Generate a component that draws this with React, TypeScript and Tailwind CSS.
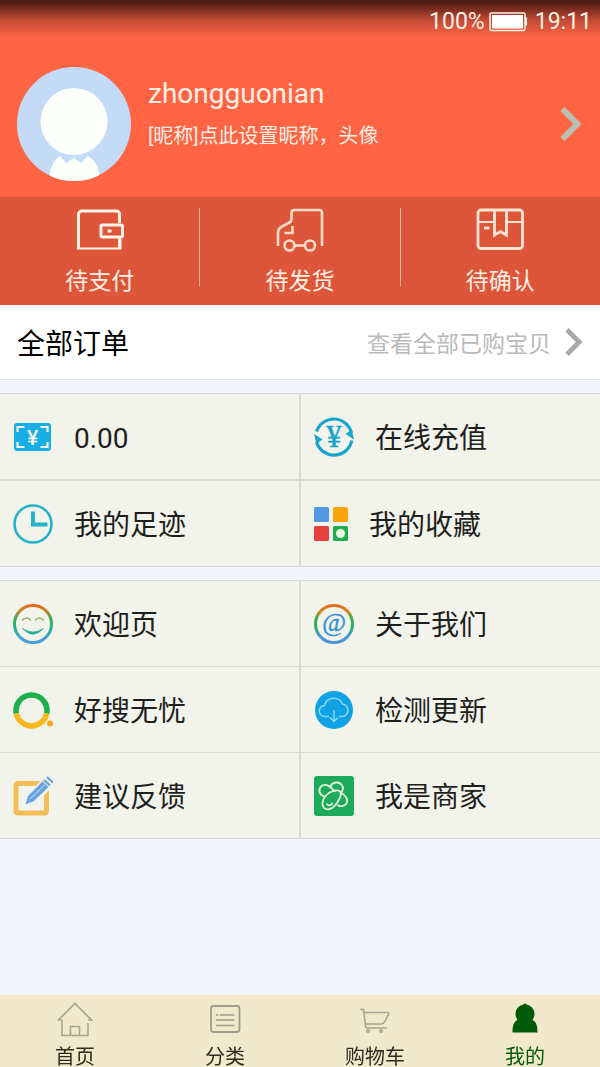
import {PropsWithChildren, ReactNode} from "react";

interface EntryProps {
  icon: ReactNode;
  label: string;
}

interface TabProps extends EntryProps {
  active?: boolean;
}

const WalletIcon = () => (
  <svg width="48" height="44" viewBox="0 0 48 44" fill="none" stroke="#fff3e6" strokeWidth="3">
    <path d="M43.5 15V6a3 3 0 0 0-3-3H6a3.500 3.500 0 0 0-3.500 3.500V40" />
    <path d="M1 40.500h43.500V31" strokeWidth="2" />
    <path d="M43.500 30v11" />
    <rect x="25" y="17" width="21.500" height="12" rx="1.500" />
    <rect x="31.500" y="21.500" width="4" height="3" fill="#fff3e6" stroke="none" />
  </svg>
);

const TruckIcon = () => (
  <svg width="48" height="44" viewBox="0 0 48 44" fill="none" stroke="#fbdccb" strokeWidth="2.600">
    <path d="M2 38V25q0-4 3-6l8.500-4.500Q15.500 13.500 15.500 11V5q0-3 3-3H43q3 0 3 3v33" />
    <path d="M16.500 18v7H8.500" />
    <circle cx="13.500" cy="37.500" r="5" />
    <circle cx="34" cy="37.500" r="5" />
    <path d="M18.500 37.500H29" />
  </svg>
);

const ParcelIcon = () => (
  <svg width="48" height="44" viewBox="0 0 48 44" fill="none" stroke="#fde5d6" strokeWidth="2.800">
    <rect x="2" y="2" width="44.500" height="38.500" rx="3" />
    <path d="M2 14h16M30.500 14h16" strokeWidth="2.200" />
    <path d="M18.500 2v25l6-3.500 6 3.500V2" />
    <path d="M8 20h5.500" />
  </svg>
);

const BalanceIcon = () => (
  <svg width="40" height="40" viewBox="0 0 40 40">
    <rect x="1" y="6" width="37" height="28" rx="3" fill="#18aee6" />
    <path d="M4.500 15v-5h7M34.500 15v-5h-7M4.500 25v5h7M34.500 25v5h-7" fill="none" stroke="#f2f3ea" strokeWidth="2.200" />
    <text x="19.500" y="27.500" textAnchor="middle" fontFamily="Roboto, sans-serif" fontSize="21" fontWeight="500" fill="#f2f3ea">
      ¥
    </text>
  </svg>
);

const RechargeIcon = () => (
  <svg width="40" height="40" viewBox="0 0 40 40">
    <g fill="none" stroke="#17a5cf" strokeWidth="3.200">
      <path d="M2.500 14.500A18.200 18.200 0 0 1 37.500 16" />
      <path d="M37.800 23.500A18.200 18.200 0 0 1 2.500 25" />
    </g>
    <path d="M31.500 17l6-4.500 2.500 10zM8.500 22.500l-6 4.500L0 17z" fill="#17a5cf" />
    <text x="20" y="29.500" textAnchor="middle" fontFamily="Liberation Serif, serif" fontSize="31" fill="#17a5cf" stroke="#17a5cf" strokeWidth="0.500">
      ¥
    </text>
  </svg>
);

const ClockIcon = () => (
  <svg width="40" height="40" viewBox="0 0 40 40" fill="none" stroke="#25b2cb">
    <circle cx="20" cy="20" r="18.500" strokeWidth="2.600" />
    <path d="M20 7.500V20.500H34.500" strokeWidth="4" />
  </svg>
);

const FavoritesIcon = () => (
  <svg width="34" height="34" viewBox="0 0 34 34">
    <rect width="15" height="15" rx="1.500" fill="#5397e5" />
    <rect x="19" width="15" height="15" rx="1.500" fill="#fba30a" />
    <rect y="19" width="15" height="15" rx="1.500" fill="#e63f40" />
    <rect x="19" y="19" width="15" height="15" rx="1.500" fill="#1fae4f" />
    <circle cx="26.500" cy="26.500" r="4.500" fill="#eef7df" />
  </svg>
);

const SmileIcon = () => (
  <svg width="40" height="40" viewBox="0 0 40 40" fill="none">
    <defs>
      <linearGradient id="smile-ring" x1="0" y1="0" x2="0" y2="1">
        <stop offset="0" stopColor="#ee6a1c" />
        <stop offset="0.150" stopColor="#c48a26" />
        <stop offset="0.350" stopColor="#3dae4a" />
        <stop offset="0.600" stopColor="#1fb08a" />
        <stop offset="0.900" stopColor="#4a9fd8" />
      </linearGradient>
    </defs>
    <circle cx="20" cy="20" r="18.500" stroke="url(#smile-ring)" strokeWidth="3" />
    <path d="M9 16.500q4.500-5 9 0M22 16.500q4.500-5 9 0" stroke="#93b56a" strokeWidth="1.600" />
    <path d="M9.500 24.500q10.500 11.500 21 0q-10.500 7-21 0z" fill="#27ad90" stroke="#27ad90" strokeWidth="0.600" />
  </svg>
);

const AboutIcon = () => (
  <svg width="40" height="40" viewBox="0 0 40 40" fill="none">
    <defs>
      <linearGradient id="about-ring" x1="0" y1="0" x2="0" y2="1">
        <stop offset="0" stopColor="#ee6a1c" />
        <stop offset="0.180" stopColor="#d08a20" />
        <stop offset="0.300" stopColor="#4caf3f" />
        <stop offset="0.550" stopColor="#27ac68" />
        <stop offset="0.850" stopColor="#4a95d8" />
      </linearGradient>
    </defs>
    <circle cx="20" cy="20" r="18.500" stroke="url(#about-ring)" strokeWidth="3" />
    <text x="20" y="27" textAnchor="middle" fontFamily="Liberation Serif, serif" fontStyle="italic" fontSize="26" fill="#3390d6" stroke="#3390d6" strokeWidth="0.400">
      @
    </text>
  </svg>
);

const SearchIcon = () => (
  <svg width="40" height="40" viewBox="0 0 40 40" fill="none" strokeWidth="5.500">
    <path d="M3.300 23.500a15.500 15.500 0 1 1 30.400 0" stroke="#1bb04c" />
    <path d="M3.300 23.500a15.500 15.500 0 0 0 30.400 0" stroke="#f8b71f" />
    <circle cx="37" cy="33.500" r="3" fill="#f5a81f" strokeWidth="0" />
  </svg>
);

const UpdateIcon = () => (
  <svg width="40" height="40" viewBox="0 0 40 40" fill="none" stroke="#8ad8f7" strokeWidth="1.500">
    <circle cx="20" cy="20" r="19" fill="#0ea2e4" stroke="none" />
    <path d="M15 26.500h-4a5.500 5.500 0 0 1-.500-11 9.500 9.500 0 0 1 18-1.500 6.400 6.400 0 0 1 .500 12.500h-4" />
    <path d="M20 20v11M16 27.500l4 4 4-4" />
  </svg>
);

const FeedbackIcon = () => (
  <svg width="40" height="40" viewBox="0 0 40 40">
    <rect x="3" y="7.500" width="30.500" height="29.500" rx="2" fill="none" stroke="#f3be57" strokeWidth="5" />
    <path d="M11 30l3-11L31 2l9 8-17 18z" fill="#f2f3ea" />
    <path d="M12.500 28.500l2.500-8.500L29.500 5.500l6 5.500L21 25z" fill="#68a3e0" />
    <path d="M31 4l6 5.500M34 1l6 5.500" stroke="#68a3e0" strokeWidth="2.200" />
    <path d="M17 23L32 8.500" stroke="#a7cbf0" strokeWidth="1.200" />
  </svg>
);

const MerchantIcon = () => (
  <svg width="40" height="40" viewBox="0 0 40 40" fill="none" stroke="#e2f5d4" strokeWidth="1.800">
    <rect width="40" height="40" rx="3" fill="#1daa5d" stroke="none" />
    <path d="M10.500 20.500C5 19 4 13.500 7 10.500c3.500-3.500 9-1.500 14 5.500" />
    <path d="M16.500 11C17 6.500 24 5 27.500 8.500c2.500 3 1.500 6.500-1 8.500" />
    <path d="M27 17c5 2 7.500 7 5.500 10.500-2 3-6.500 3.500-9 1.500" />
    <path d="M12 19.500c4-4.500 10-6 13.500-4.500 2.500 1.500 1.500 5-1 9.500-3 6-8 10-12.500 8.500-5-2-4.500-8.500 0-13.500z" />
    <path d="M12.500 27.500q3 4 6-.500" />
  </svg>
);

const HomeIcon = () => (
  <svg width="36" height="36" viewBox="0 0 36 36" fill="none" stroke="#a9a490" strokeWidth="1.600">
    <path d="M5 18H1.500L18 1.500 34.500 18H31" />
    <path d="M5 18v15.500h26V21" />
    <path d="M13.500 33.500V24.500h9v9" />
  </svg>
);

const CategoryIcon = () => (
  <svg width="36" height="36" viewBox="0 0 36 36" fill="none" stroke="#a09c8b">
    <rect x="4" y="4" width="28.500" height="26" rx="2.500" strokeWidth="1.800" />
    <path d="M13 13h14.500M9 18h18.500M9 23.500h18.500M9 13h2.500" strokeWidth="1.600" />
  </svg>
);

const CartIcon = () => (
  <svg width="36" height="36" viewBox="0 0 36 36" fill="none" stroke="#a9a490" strokeWidth="1.600">
    <path d="M3 7.500h3.500l2 16q0 2.500 2 2.500H30" />
    <path d="M7 10.500h23.500q2 0 1 2L27.500 20q-1 2-3 2H8.500" />
    <circle cx="11" cy="29" r="1.300" />
    <circle cx="24" cy="29" r="1.300" />
  </svg>
);

const ProfileIcon = () => (
  <svg width="36" height="36" viewBox="0 0 36 36" fill="#025b06">
    <path d="M18 1.500c2 1.500 9.500 2.500 9.500 10.500 0 3-1.500 5-2 6 3 1.500 5 4 5 12.500h-25c0-8.500 2-11 5-12.500-.500-1-2-3-2-6 0-8 7.500-9 9.500-10.500z" />
  </svg>
);

const Avatar = () => (
  <svg className="size-[114px] shrink-0" viewBox="0 0 114 114" role="img" aria-label="头像">
    <defs>
      <clipPath id="avatar-clip">
        <circle cx="57" cy="57" r="57" />
      </clipPath>
    </defs>
    <g clipPath="url(#avatar-clip)">
      <rect width="114" height="114" fill="#c4dbf7" />
      <circle cx="57" cy="54.500" r="33.500" fill="#fdfffa" />
      <path d="M33 114v-8q2-12 10-17l6 7 8-5 7 5 7-7q9 5 11 17v8z" fill="#fdfffa" />
    </g>
  </svg>
);

const Chevron = ({className}: {className: string}) => (
  <svg className={className} viewBox="0 0 20 32" fill="none" stroke="currentColor" strokeWidth="5.500">
    <path d="M2 2l14 14L2 30" />
  </svg>
);

const StatusBar = () => (
  <div className="flex h-11 items-center justify-end gap-1 bg-linear-to-b from-[#4f1c14] from-5% via-[#c04a33] via-45% to-[#ff6444] to-85% pr-2 text-[23px] leading-6 text-[#fff0e4]">
    <span>100%</span>
    <svg width="38" height="20" viewBox="0 0 38 20" fill="none">
      <rect x="1" y="1" width="35" height="17.500" rx="1.500" stroke="#fff3e6" strokeWidth="1.600" />
      <rect x="3" y="3" width="31" height="13.500" fill="#fff" />
      <path d="M37 5.500v8" stroke="#fff3e6" strokeWidth="2" />
    </svg>
    <span className="ml-1">19:11</span>
  </div>
);

const OrderState = ({icon, label}: EntryProps) => (
  <button type="button" className="flex h-[86px] flex-1 flex-col items-center justify-between text-[#fff0e4]">
    {icon}
    <span className="text-[23px] leading-6">{label}</span>
  </button>
);

const MenuCell = ({icon, label}: EntryProps) => (
  <a href="#" className="flex h-[85px] items-center gap-[21px] bg-[#f2f3ea] pl-[13px] text-[28px] leading-9 text-[#1f1f1d]">
    {icon}
    <span className="pt-1">{label}</span>
  </a>
);

const MenuGroup = ({className, children}: PropsWithChildren<{className: string}>) => (
  <section className={`mt-[13px] grid grid-cols-2 gap-x-[2px] border-y border-[#d8dbd9] bg-[#d8dbd9] ${className}`}>
    {children}
  </section>
);

const Tab = ({icon, label, active}: TabProps) => (
  <a
    href="#"
    aria-current={active ? "page" : undefined}
    className={`flex flex-col items-center justify-between text-xl leading-5 ${active ? "text-[#025b06]" : "text-[#2d2a20]"}`}
  >
    {icon}
    {label}
  </a>
);

export default function App() {
  return (
    <div className="flex min-h-screen flex-col bg-[#f1f4f9] font-[Roboto,'Noto_Sans_CJK_SC',sans-serif]">
      <header className="bg-[#ff6444]">
        <StatusBar />
        <a href="#" className="flex items-center pt-[23px] pr-[18px] pb-4 pl-[17px] text-[#fff0e4]">
          <Avatar />
          <div className="ml-[17px] flex-1">
            <p className="text-[28px] leading-8">zhongguonian</p>
            <p className="mt-3 mb-5 text-xl leading-7">[昵称]点此设置昵称，头像</p>
          </div>
          <Chevron className="h-[34px] w-[22px] text-[#b9c0b4]" />
        </a>
      </header>

      <nav aria-label="订单状态" className="flex h-[108px] items-start bg-[#de563a] pt-[11px]">
        <OrderState icon={<WalletIcon />} label="待支付" />
        <div className="h-[78px] w-px bg-[#f3b9a2]" />
        <OrderState icon={<TruckIcon />} label="待发货" />
        <div className="h-[78px] w-px bg-[#f3b9a2]" />
        <OrderState icon={<ParcelIcon />} label="待确认" />
      </nav>

      <a href="#" className="flex h-[75px] items-center border-b border-[#dde2e1] bg-white px-[17px]">
        <h2 className="pt-1.5 text-[28px] leading-9 text-black">全部订单</h2>
        <span className="mr-3.5 ml-auto pt-1.5 text-[23px] leading-9 text-[#b9b9b9]">查看全部已购宝贝</span>
        <Chevron className="h-7 w-[18px] text-[#a9a9a9]" />
      </a>

      <MenuGroup className="gap-y-[2px]">
        <MenuCell icon={<BalanceIcon />} label="0.00" />
        <MenuCell icon={<RechargeIcon />} label="在线充值" />
        <MenuCell icon={<ClockIcon />} label="我的足迹" />
        <MenuCell icon={<FavoritesIcon />} label="我的收藏" />
      </MenuGroup>

      <MenuGroup className="gap-y-px">
        <MenuCell icon={<SmileIcon />} label="欢迎页" />
        <MenuCell icon={<AboutIcon />} label="关于我们" />
        <MenuCell icon={<SearchIcon />} label="好搜无忧" />
        <MenuCell icon={<UpdateIcon />} label="检测更新" />
        <MenuCell icon={<FeedbackIcon />} label="建议反馈" />
        <MenuCell icon={<MerchantIcon />} label="我是商家" />
      </MenuGroup>

      <nav aria-label="主导航" className="sticky bottom-0 mt-auto grid h-[72px] grid-cols-4 bg-[#f2e8ca] pt-[7px]">
        <Tab icon={<HomeIcon />} label="首页" />
        <Tab icon={<CategoryIcon />} label="分类" />
        <Tab icon={<CartIcon />} label="购物车" />
        <Tab icon={<ProfileIcon />} label="我的" active />
      </nav>
    </div>
  );
}
